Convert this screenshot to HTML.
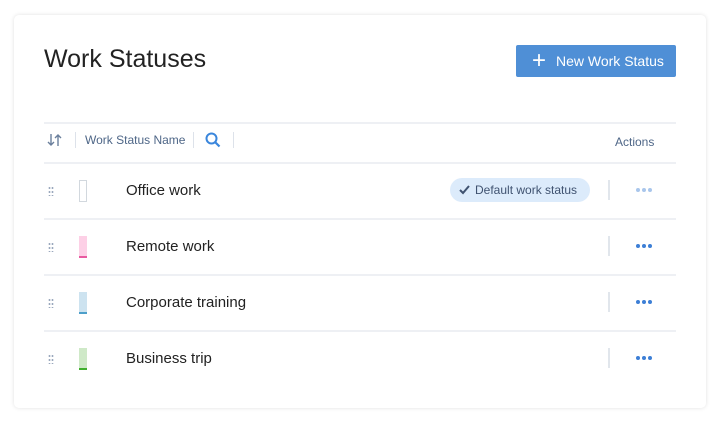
<!DOCTYPE html>
<html><head><style>
*{margin:0;padding:0;box-sizing:border-box}
body{width:720px;height:423px;background:#fff;font-family:"Liberation Sans",sans-serif;position:relative;overflow:hidden}
.card{position:absolute;left:14px;top:15px;width:692px;height:393px;background:#fff;border-radius:5px;box-shadow:0 0 4px rgba(0,0,0,.12)}
.abs{position:absolute}
h1{position:absolute;left:44px;top:45px;font-size:25px;font-weight:400;color:#222}
.btn{position:absolute;left:516px;top:45px;width:160px;height:32px;background:#4f8fd6;border-radius:2px;color:#fff;font-size:14px;line-height:32px}
.hl{position:absolute;left:44px;width:632px;height:2px;background:#eef0f4}
.vs{position:absolute;width:1px;background:#dde2ea}
.hd{position:absolute;font-size:12px;color:#4e6687}
.name{position:absolute;left:126px;font-size:15px;color:#222}
.bar{position:absolute;left:79px;width:8px;height:22px}
.dots{position:absolute;left:636px;display:flex;gap:2px}
.dots i{width:4px;height:4px;border-radius:50%;background:#3d7fd6;display:block}
.drag{position:absolute;left:48px;width:6px;height:10px;background:radial-gradient(circle,#9aa8bd 0.8px,transparent 1.1px) 0 0/3px 4px}
</style></head><body>
<div class="card"></div>
<h1>Work Statuses</h1>
<div class="btn"><span class="abs" style="left:16px;top:0;font-size:24px;font-weight:300;line-height:31px">+</span><span class="abs" style="left:40px">New Work Status</span></div>
<div class="hl" style="top:122px"></div>
<svg class="abs" style="left:47px;top:133px" width="16" height="14" viewBox="0 0 16 14"><path d="M4 1v11M1 9l3 3 3-3M11 13V2M8 5l3-3 3 3" stroke="#6a7f9c" stroke-width="1.4" fill="none"/></svg>
<div class="vs" style="left:75px;top:132px;height:16px"></div>
<div class="hd" style="left:85px;top:133px">Work Status Name</div>
<div class="vs" style="left:193px;top:132px;height:16px"></div>
<svg class="abs" style="left:205px;top:132px" width="16" height="16" viewBox="0 0 16 16"><circle cx="6.5" cy="6.5" r="5" stroke="#3a86dc" stroke-width="2" fill="none"/><path d="M10 10l4.5 4.5" stroke="#3a86dc" stroke-width="2.2"/></svg>
<div class="vs" style="left:233px;top:132px;height:16px"></div>
<div class="hd" style="left:615px;top:135px">Actions</div>
<div class="hl" style="top:162px"></div>
<div class="hl" style="top:218px"></div>
<div class="hl" style="top:274px"></div>
<div class="hl" style="top:330px"></div>

<div class="drag" style="top:186px"></div>
<div class="bar" style="top:180px;border:1.5px solid #d2d8de;height:22px"></div>
<div class="name" style="top:182px">Office work</div>
<div class="abs" style="left:450px;top:178px;width:140px;height:24px;background:#dcebfb;border-radius:12px;font-size:12px;color:#3f5270;line-height:24px;padding-left:25px">Default work status</div>
<svg class="abs" style="left:459px;top:185px" width="11" height="10" viewBox="0 0 11 10"><path d="M1 5l3 3 6-7" stroke="#3f5270" stroke-width="2" fill="none"/></svg>
<div class="vs" style="left:608px;top:180px;height:20px;width:2px;background:#e1e6ec"></div>
<div class="dots" style="top:188px"><i style="background:#a9c6ec"></i><i style="background:#a9c6ec"></i><i style="background:#a9c6ec"></i></div>

<div class="drag" style="top:242px"></div>
<div class="bar" style="top:236px;background:#fdd0e6;border-bottom:2px solid #e85aa0"></div>
<div class="name" style="top:238px">Remote work</div>
<div class="vs" style="left:608px;top:236px;height:20px;width:2px;background:#e1e6ec"></div>
<div class="dots" style="top:244px"><i></i><i></i><i></i></div>

<div class="drag" style="top:298px"></div>
<div class="bar" style="top:292px;background:#cde3f0;border-bottom:2px solid #4d9fca"></div>
<div class="name" style="top:294px">Corporate training</div>
<div class="vs" style="left:608px;top:292px;height:20px;width:2px;background:#e1e6ec"></div>
<div class="dots" style="top:300px"><i></i><i></i><i></i></div>

<div class="drag" style="top:354px"></div>
<div class="bar" style="top:348px;background:#cfe9c8;border-bottom:2px solid #3fae2e"></div>
<div class="name" style="top:350px">Business trip</div>
<div class="vs" style="left:608px;top:348px;height:20px;width:2px;background:#e1e6ec"></div>
<div class="dots" style="top:356px"><i></i><i></i><i></i></div>
</body></html>
